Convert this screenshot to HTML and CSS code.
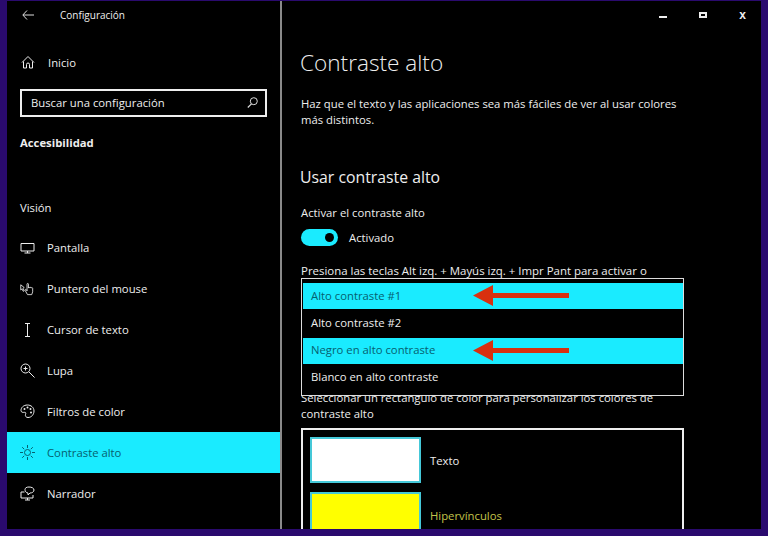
FILE: index.html
```html
<!DOCTYPE html>
<html lang="es">
<head>
  <meta charset="UTF-8">
  <title>Configuración</title>
  <link rel="stylesheet" href="styles.css">
</head>
<body>
  <div class="window">
    <aside class="sidebar">
      <div class="titlebar">
        <svg class="back" width="12" height="10" viewBox="0 0 12 10"><path d="M5 .5.8 5 5 9.500M1 5h11" fill="none" stroke="#ddd" stroke-width="1"/></svg>
        <span>Configuración</span>
      </div>
      <a class="home">
        <svg width="14" height="14" viewBox="0 0 14 14"><path d="M1 7.500 7 1.500l6 6M2.500 6.500V13h3V9.500a1.500 1.500 0 0 1 3 0V13h3V6.500" fill="none" stroke="#eee" stroke-width="1"/></svg>
        <span>Inicio</span>
      </a>
      <div class="search">
        <span>Buscar una configuración</span>
        <svg width="11" height="11" viewBox="0 0 11 11"><circle cx="6.800" cy="4.200" r="3.500" fill="none" stroke="#ddd"/><path d="M4.500 6.800 .8 10.500" stroke="#ddd" stroke-width="1.200"/></svg>
      </div>
      <div class="group">Accesibilidad</div>
      <div class="section">Visión</div>
      <nav class="nav">
        <a class="nav-item">
          <svg width="14" height="14" viewBox="0 0 14 14"><path d="M.5 2.500h13v7.500H.5zM4 12h6M7 10v2" fill="none" stroke="#eee"/></svg>
          <span>Pantalla</span>
        </a>
        <a class="nav-item">
          <svg width="16" height="14" viewBox="0 0 16 14"><path d="M.8 2.500 4.500 5.500 3 6.500 4.500 9 3.500 9.500 2 7 .8 8z" fill="none" stroke="#eee" stroke-width=".9"/><path d="M8 13 5.500 8.500c-.5-1 .7-1.500 1.300-.7L7.500 9V1.800c0-1 1.500-1 1.500 0V6c0-1 1.500-1 1.500 0 0-1 1.500-1 1.500 0 0-.7 1.500-.7 1.500.3V10l-1 3z" fill="none" stroke="#eee" stroke-width=".9"/></svg>
          <span>Puntero del mouse</span>
        </a>
        <a class="nav-item">
          <svg width="14" height="14" viewBox="0 0 14 14"><path d="M4.500 .5h5M4.500 13.500h5M7 .5v13" fill="none" stroke="#eee"/></svg>
          <span>Cursor de texto</span>
        </a>
        <a class="nav-item">
          <svg width="15" height="15" viewBox="0 0 15 15"><circle cx="5.500" cy="5.500" r="4.500" fill="none" stroke="#eee"/><path d="M3.500 5.500h4M5.500 3.500v4M9 9l5.500 5.500" fill="none" stroke="#eee"/></svg>
          <span>Lupa</span>
        </a>
        <a class="nav-item">
          <svg width="15" height="15" viewBox="0 0 15 15"><path d="M7.500 1C3.500 1 1 3.500 1 6.500c0 2 2 2 3.500 1.800 1.500-.2 1.500 1.200 1 2.200-.5 1.500.5 3 2.500 3 3.500 0 6-3 6-6.500S11 1 7.500 1z" fill="none" stroke="#eee"/><circle cx="4.500" cy="5" r="1" fill="#eee"/><circle cx="7.500" cy="3.500" r="1" fill="#eee"/><circle cx="10.500" cy="5" r="1" fill="#eee"/><circle cx="11" cy="8.500" r="1" fill="#eee"/></svg>
          <span>Filtros de color</span>
        </a>
        <a class="nav-item active">
          <svg width="15" height="15" viewBox="0 0 15 15"><circle cx="7.500" cy="7.500" r="3" fill="none" stroke="#06606f"/><path d="M7.500 0v3M7.500 12v3M0 7.500h3M12 7.500h3M2.200 2.200l2 2M10.800 10.800l2 2M2.200 12.800l2-2M10.800 4.200l2-2" fill="none" stroke="#06606f"/></svg>
          <span>Contraste alto</span>
        </a>
        <a class="nav-item">
          <svg width="15" height="15" viewBox="0 0 15 15"><path d="M4.500 6H1v6h12V9M5 14h5M7.500 12v2" fill="none" stroke="#eee"/><path d="M5 3.500C5 2 6.500 1 9 1s5 1 5 3-2 3-4 3L8 9V7C6 7 5 5 5 3.500z" fill="none" stroke="#eee"/></svg>
          <span>Narrador</span>
        </a>
      </nav>
    </aside>

    <main class="content">
      <div class="controls">
        <span class="min"></span>
        <span class="max"></span>
        <span class="close">x</span>
      </div>
      <h1>Contraste alto</h1>
      <p class="intro">Haz que el texto y las aplicaciones sea más fáciles de ver al usar colores más distintos.</p>
      <h2>Usar contraste alto</h2>
      <p class="label">Activar el contraste alto</p>
      <div class="toggle-row">
        <span class="toggle"><span class="knob"></span></span>
        <span>Activado</span>
      </div>
      <p class="shortcut">Presiona las teclas Alt izq. + Mayús izq. + Impr Pant para activar o</p>
      <p class="picker-hint">Seleccionar un rectángulo de color para personalizar los colores de contraste alto</p>
      <div class="swatches">
        <div class="swatch-row">
          <span class="swatch white"></span>
          <span>Texto</span>
        </div>
        <div class="swatch-row link">
          <span class="swatch yellow"></span>
          <span>Hipervínculos</span>
        </div>
      </div>

      <ul class="dropdown">
        <li class="hl">Alto contraste #1
          <svg class="arrow" width="96" height="21" viewBox="0 0 96 21"><path d="M0 10.500 20 0v8h76v5H20v8z" fill="#d9300f"/></svg>
        </li>
        <li>Alto contraste #2</li>
        <li class="hl">Negro en alto contraste
          <svg class="arrow" width="96" height="21" viewBox="0 0 96 21"><path d="M0 10.500 20 0v8h76v5H20v8z" fill="#d9300f"/></svg>
        </li>
        <li>Blanco en alto contraste</li>
      </ul>
    </main>
  </div>
</body>
</html>
```

FILE: styles.css
```css
* {
  box-sizing: border-box;
}

html, body {
  margin: 0;
  height: 100%;
}

body {
  background: #2a0a6e;
  padding: 1px 7px 7px 7px;
  font-family: "Open Sans", "Noto Sans", sans-serif;
  font-size: 11.300px;
  color: #eee;
  overflow: hidden;
}

.window {
  display: flex;
  height: 100%;
  background: #000;
  overflow: hidden;
}

p, h1, h2, ul {
  margin: 0;
  padding: 0;
}

/* sidebar */
.sidebar {
  width: 275px;
  flex: none;
  border-right: 2px solid #8a8a8a;
}

.titlebar {
  display: flex;
  align-items: center;
  height: 28px;
  padding-left: 15px;
  font-size: 10px;
}

.titlebar span {
  margin-left: 26px;
}

.home {
  display: flex;
  align-items: center;
  gap: 13px;
  margin-top: 23px;
  padding-left: 14px;
  height: 20px;
}

.search {
  display: flex;
  align-items: center;
  justify-content: space-between;
  width: 247px;
  height: 28px;
  margin: 17px 0 0 13px;
  padding: 0 7px 2px 9px;
  border: 2px solid #eee;
}

.group {
  margin: 18px 0 0 13px;
  font-weight: 700;
}

.section {
  margin: 50px 0 0 13px;
}

.nav {
  margin-top: 12px;
}

.nav-item {
  display: flex;
  align-items: center;
  height: 41px;
  padding-left: 13px;
}

.nav-item svg {
  width: 15px;
  margin-right: 12px;
}

.nav-item.active {
  background: #1aebff;
  color: #06606f;
}

/* main pane */
.content {
  position: relative;
  flex: 1;
  padding: 0 0 0 19px;
}

.controls {
  display: flex;
  justify-content: flex-end;
  align-items: center;
  gap: 32px;
  height: 28px;
  padding-right: 15px;
}

.min {
  width: 8px;
  height: 2px;
  margin-top: 4px;
  background: #eee;
}

.max {
  width: 8px;
  height: 6px;
  border: 2px solid #eee;
}

.close {
  font-family: "Liberation Sans", sans-serif;
  font-weight: 700;
  font-size: 12px;
  line-height: 12px;
}

h1 {
  margin: 19px 0 0 -1px;
  font-size: 22.600px;
  font-weight: 300;
  line-height: 30px;
}

.intro {
  width: 385px;
  margin-top: 18px;
  line-height: 16px;
}

h2 {
  margin: 39px 0 0 -1px;
  font-size: 15.800px;
  font-weight: 400;
  line-height: 20px;
}

.label {
  margin-top: 18px;
}

.toggle-row {
  display: flex;
  align-items: center;
  gap: 11px;
  margin-top: 9px;
}

.toggle {
  display: flex;
  align-items: center;
  justify-content: flex-end;
  width: 37px;
  height: 17px;
  padding-right: 4px;
  border-radius: 9px;
  background: #1aebff;
}

.knob {
  width: 9px;
  height: 9px;
  border-radius: 50%;
  background: #000;
}

.shortcut {
  margin-top: 17px;
  font-size: 11.450px;
}

.picker-hint {
  width: 380px;
  margin-top: 112px;
  line-height: 16px;
}

.swatches {
  width: 383px;
  height: 200px;
  margin-top: 6px;
  padding: 7px 0 0 7px;
  border: 2px solid #eee;
}

.swatch-row {
  display: flex;
  align-items: center;
  gap: 9px;
  margin-bottom: 9px;
}

.swatch-row.link {
  color: #c4c44a;
}

.swatch {
  width: 111px;
  height: 46px;
  border: 2px solid #45c8d8;
}

.swatch.white {
  background: #fff;
}

.swatch.yellow {
  background: #ff0;
}

/* theme list drawn over the page */
.dropdown {
  position: absolute;
  left: 19px;
  top: 277px;
  width: 383px;
  height: 118px;
  padding-top: 4px;
  list-style: none;
  background: #000;
  border: 1px solid #ddd;
}

.dropdown li {
  position: relative;
  display: flex;
  align-items: center;
  height: 26px;
  margin: 0 0 1.300px 1px;
  padding: 0 0 2px 8px;
}

.dropdown li.hl {
  background: #1aebff;
  color: #06606f;
}

.arrow {
  position: absolute;
  left: 170px;
  top: 2px;
}
```
